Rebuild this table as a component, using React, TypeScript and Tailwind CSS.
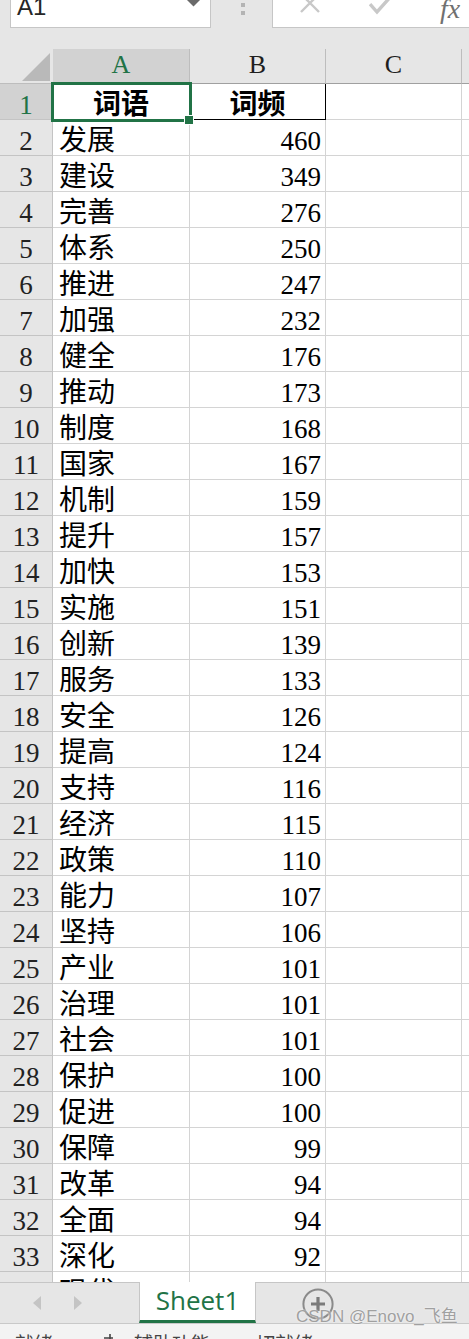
import React from 'react';

const data: [string, number][] = [
  ['发展', 460],
  ['建设', 349],
  ['完善', 276],
  ['体系', 250],
  ['推进', 247],
  ['加强', 232],
  ['健全', 176],
  ['推动', 173],
  ['制度', 168],
  ['国家', 167],
  ['机制', 159],
  ['提升', 157],
  ['加快', 153],
  ['实施', 151],
  ['创新', 139],
  ['服务', 133],
  ['安全', 126],
  ['提高', 124],
  ['支持', 116],
  ['经济', 115],
  ['政策', 110],
  ['能力', 107],
  ['坚持', 106],
  ['产业', 101],
  ['治理', 101],
  ['社会', 101],
  ['保护', 100],
  ['促进', 100],
  ['保障', 99],
  ['改革', 94],
  ['全面', 94],
  ['深化', 92],
  ['现代', 91],
];

function FormulaBar() {
  return (
    <div className="flex h-[49px] shrink-0 items-start bg-[#e6e6e6]">
      <div className="relative ml-[10px] flex h-[28px] w-[201px] shrink-0 items-end border-x border-b border-[#c6c6c6] bg-white pb-[8px] pl-[6px]">
        <span className="font-['Liberation_Sans',sans-serif] text-[24px] leading-none text-[#262626]">A1</span>
        <svg className="absolute right-[10px] top-0" width="13" height="7" viewBox="0 0 13 7">
          <polygon points="0,0 13,0 6.5,6.5" fill="#6a6a6a" />
        </svg>
      </div>
      <div className="ml-[30px] flex w-[4px] shrink-0 flex-col gap-[4px] pt-[3px]">
        <span className="block h-[4px] w-[4px] bg-[#b4b4b4]" />
        <span className="block h-[4px] w-[4px] bg-[#b4b4b4]" />
      </div>
      <div className="relative ml-[27px] h-[28px] flex-1 overflow-hidden border-b border-l border-[#c6c6c6] bg-white">
        <svg className="absolute left-[26px] top-[-8px]" width="22" height="22" viewBox="0 0 22 22">
          <path d="M2 2 L20 20 M20 2 L2 20" stroke="#c8c8c8" strokeWidth="2.4" fill="none" />
        </svg>
        <svg className="absolute left-[96px] top-[-9px]" width="25" height="24" viewBox="0 0 25 24">
          <polyline points="1,13 8,21 24,3" stroke="#c8c8c8" strokeWidth="3.4" fill="none" />
        </svg>
        <span className="absolute left-[167px] top-[-5px] font-['Liberation_Serif',serif] text-[28px] italic leading-none text-[#707070]">
          fx
        </span>
      </div>
    </div>
  );
}

function HeaderRow() {
  return (
    <div className="flex h-[35px] shrink-0 bg-[#e6e6e6] font-['Liberation_Serif',serif] text-[26px] leading-none">
      <div className="relative w-[53px] shrink-0 border-b border-[#bdbdbd]">
        <svg className="absolute left-[22px] top-[4px]" width="28" height="28" viewBox="0 0 28 28">
          <polygon points="0,28 28,28 28,0" fill="#b9b9b9" />
        </svg>
      </div>
      <div className="flex w-[137px] shrink-0 items-end justify-center border-b-2 border-r border-[#217346] border-r-[#bdbdbd] bg-[#d2d2d2] pb-[4px] text-[#217346]">
        A
      </div>
      <div className="flex w-[136px] shrink-0 items-end justify-center border-b border-r border-[#a0a0a0] border-r-[#bdbdbd] pb-[5px] text-[#1f1f1f]">
        B
      </div>
      <div className="flex w-[136px] shrink-0 items-end justify-center border-b border-r border-[#a0a0a0] border-r-[#bdbdbd] pb-[5px] text-[#1f1f1f]">
        C
      </div>
      <div className="flex-1 border-b border-[#a0a0a0]" />
    </div>
  );
}

function FirstRow() {
  return (
    <div className="flex h-[36px] shrink-0 font-['Liberation_Serif','Noto_Sans_CJK_SC',serif] leading-none">
      <div className="flex w-[53px] shrink-0 items-end justify-center border-b border-r border-[#c4c4c4] bg-[#d2d2d2] text-[27px] text-[#217346]">
        1
      </div>
      <div className="flex w-[137px] shrink-0 items-end justify-center border-b border-r border-black bg-white text-[28px] font-bold text-black">
        词语
      </div>
      <div className="flex w-[136px] shrink-0 items-end justify-center border-b border-r border-black bg-white text-[28px] font-bold text-black">
        词频
      </div>
      <div className="w-[136px] shrink-0 border-b border-r border-[#d4d4d4] bg-white" />
      <div className="flex-1 border-b border-[#d4d4d4] bg-white" />
    </div>
  );
}

function DataRow({ n, word, freq }: { n: number; word: string; freq: number }) {
  return (
    <div className="flex h-[36px] shrink-0 font-['Liberation_Serif','Noto_Sans_CJK_SC',serif] leading-none text-black">
      <div className="flex w-[53px] shrink-0 items-end justify-center border-b border-r border-[#c4c4c4] bg-[#e6e6e6] text-[27px] text-[#222]">
        {n}
      </div>
      <div className="flex w-[137px] shrink-0 items-end border-b border-r border-[#d4d4d4] bg-white pl-[6px] text-[28px]">
        {word}
      </div>
      <div className="flex w-[136px] shrink-0 items-end justify-end border-b border-r border-[#d4d4d4] bg-white pr-[4px] text-[27px]">
        {freq}
      </div>
      <div className="w-[136px] shrink-0 border-b border-r border-[#d4d4d4] bg-white" />
      <div className="flex-1 border-b border-[#d4d4d4] bg-white" />
    </div>
  );
}

function SheetTabs() {
  return (
    <div className="flex h-[41px] shrink-0 bg-[#e6e6e6]">
      <div className="flex w-[139px] shrink-0 items-center gap-[33px] border-t border-[#c6c6c6] pl-[33px]">
        <svg width="8" height="14" viewBox="0 0 8 14">
          <polygon points="8,0 8,14 0,7" fill="#c4c4c4" />
        </svg>
        <svg width="8" height="14" viewBox="0 0 8 14">
          <polygon points="0,0 0,14 8,7" fill="#c4c4c4" />
        </svg>
      </div>
      <div className="flex w-[117px] shrink-0 items-center justify-center border-x border-b-[3px] border-[#c6c6c6] border-b-[#217346] bg-white pb-[2px] font-['Open_Sans',sans-serif] text-[26px] leading-none text-[#217346]">
        Sheet1
      </div>
      <div className="flex flex-1 items-start border-t border-[#c6c6c6] pl-[46px] pt-[5px]">
        <svg width="32" height="32" viewBox="0 0 32 32">
          <circle cx="16" cy="16" r="14.6" stroke="#8a8a8a" strokeWidth="2" fill="none" />
          <path d="M16 9 V23 M9 16 H23" stroke="#7b7b7b" strokeWidth="3.2" />
        </svg>
      </div>
    </div>
  );
}

function StatusBar() {
  return (
    <div className="flex h-[16px] shrink-0 items-start overflow-hidden border-t border-[#c9c9c9] bg-[#f3f3f3] pl-[15px] pt-[9px] font-['Noto_Sans_CJK_SC',sans-serif] text-[19px] leading-none text-[#444]">
      <span>就绪</span>
      <svg className="ml-[48px] mt-[1px]" width="14" height="16" viewBox="0 0 14 16">
        <path d="M9 0 L9 10 M3 4 L12 4" stroke="#444" strokeWidth="1.6" fill="none" />
      </svg>
      <span className="ml-[19px]">辅助功能:</span>
      <span className="ml-[22px]">一切就绪</span>
    </div>
  );
}

export default function App() {
  return (
    <div className="relative flex h-[1339px] w-[469px] flex-col overflow-hidden bg-[#e6e6e6]">
      <FormulaBar />
      <div className="relative h-[1233px] shrink-0 overflow-hidden bg-white">
        <HeaderRow />
        <FirstRow />
        {data.map(([word, freq], i) => (
          <DataRow key={i} n={i + 2} word={word} freq={freq} />
        ))}
        <div className="pointer-events-none absolute left-[51px] top-[33px] h-[40px] w-[141px] border-[3px] border-[#217346]" />
        <div className="pointer-events-none absolute left-[184px] top-[66px] h-[10px] w-[10px] border border-white bg-[#217346]" />
      </div>
      <SheetTabs />
      <StatusBar />
      <div className="pointer-events-none absolute left-[296px] top-[1308px] font-['Liberation_Sans','Noto_Sans_CJK_SC',sans-serif] text-[17px] leading-none text-[#a0a0a0] [text-shadow:0_0_2px_#ffffff]">
        CSDN @Enovo_飞鱼
      </div>
    </div>
  );
}
